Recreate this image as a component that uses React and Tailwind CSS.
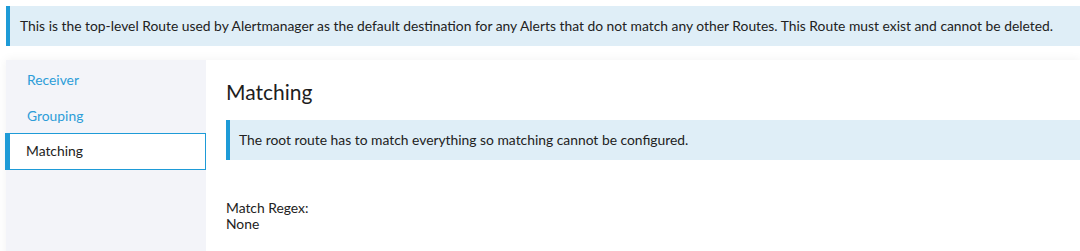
import React from "react";

const navItems = ["Receiver", "Grouping", "Matching"];

function SideNav({ active }) {
  return (
    <div className="w-[200px] shrink-0 bg-[#f3f4f9] pt-[2px]">
      {navItems.map((item) =>
        item === active ? (
          <div
            key={item}
            className="-ml-px -mt-px flex h-[37px] items-center border border-l-[5px] border-[#1e9bd7] bg-white pl-[16px] text-[13.85px] text-[#222]"
          >
            {item}
          </div>
        ) : (
          <div
            key={item}
            className="flex h-9 items-center pl-[21px] text-[13.85px] text-[#2d9dd8]"
          >
            {item}
          </div>
        )
      )}
    </div>
  );
}

export default function App() {
  return (
    <div
      className="h-[251px] overflow-hidden bg-white pl-[6px] pt-[6px] text-[#222]"
      style={{ fontFamily: "Lato, 'Open Sans', sans-serif" }}
    >
      <div className="flex h-10 items-center border-l-4 border-[#1e9bd7] bg-[#dfeef7] pl-[10px] text-[13.85px]">
        This is the top-level Route used by Alertmanager as the default
        destination for any Alerts that do not match any other Routes. This
        Route must exist and cannot be deleted.
      </div>

      <div className="mt-[14px] flex h-[220px] shadow-[0_0_10px_rgba(0,0,0,0.06)]">
        <SideNav active="Matching" />
        <div className="flex-1 bg-white pl-[20px]">
          <h2 className="mt-[19px] text-[21px] leading-[26px] text-[#1d1d1d]">
            Matching
          </h2>
          <div className="mt-[15px] flex h-10 items-center border-l-4 border-[#1e9bd7] bg-[#dfeef7] pl-[9px] text-[13.85px]">
            The root route has to match everything so matching cannot be
            configured.
          </div>
          <div className="mt-[40px] text-[13.85px] leading-4">
            <div>Match Regex:</div>
            <div>None</div>
          </div>
        </div>
      </div>
    </div>
  );
}
